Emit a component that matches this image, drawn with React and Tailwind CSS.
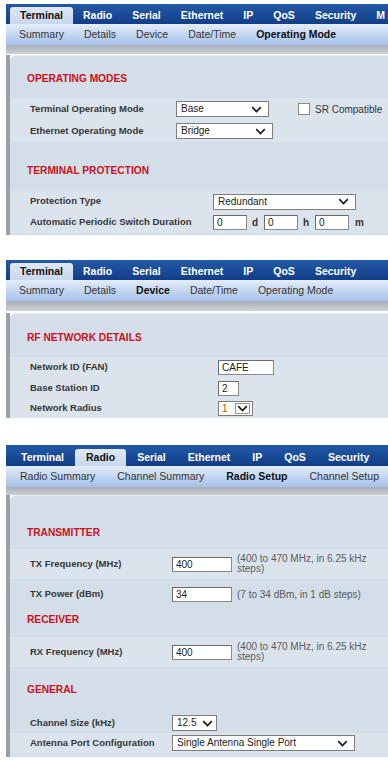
import React from "react";

const FONT = { fontFamily: '"Liberation Sans", Arial, Helvetica, sans-serif' };

function Chevron() {
  return (
    <svg width="11" height="7" viewBox="0 0 11 7" className="shrink-0">
      <path d="M1.2 1.2 L5.5 5.5 L9.8 1.2" fill="none" stroke="#1a1a1a" strokeWidth="1.7" />
    </svg>
  );
}

function Select({ value, w, chevPad = "pr-[6px]" }) {
  return (
    <div
      className={`flex items-center justify-between h-[16px] bg-white border border-[#7d7d7d] pl-[4px] ${chevPad} text-[10px] text-[#222] leading-none whitespace-nowrap`}
      style={{ width: w }}
    >
      <span>{value}</span>
      <Chevron />
    </div>
  );
}

function Input({ value, w }) {
  return (
    <div
      className="h-[15px] shrink-0 bg-white border border-[#8a8a8a] border-t-[#6a6a6a] border-l-[#6a6a6a] pl-[3px] text-[10px] text-[#222] leading-[13px]"
      style={{ width: w }}
    >
      {value}
    </div>
  );
}

function TabBar({ tabs, active, h = "h-[20px]", px = "px-[10px]" }) {
  return (
    <div className={`${h} flex items-end pl-[4px] bg-gradient-to-b from-[#2359a8] to-[#123e88] whitespace-nowrap overflow-hidden`}>
      {tabs.map((t) => (
        <div
          key={t}
          className={
            t === active
              ? `h-[17px] ${px} flex items-center rounded-t-[3px] bg-gradient-to-b from-[#dfe8f5] to-[#c7d7ef] text-[#111] font-bold text-[10.5px]`
              : `h-[17px] ${px} flex items-center text-white font-bold text-[10.5px]`
          }
        >
          {t}
        </div>
      ))}
    </div>
  );
}

function SubNav({ items, active, h = "h-[21px]", px = "px-[10px]" }) {
  return (
    <div className={`${h} flex items-center pl-[3px] bg-gradient-to-b from-[#e4edf9] to-[#a6c1ea] whitespace-nowrap overflow-hidden`}>
      {items.map((t) => (
        <div
          key={t}
          className={`${px} shrink-0 text-[10.5px] ${t === active ? "font-bold text-[#111]" : "text-[#333]"}`}
        >
          {t}
        </div>
      ))}
    </div>
  );
}

function Band({ h = "h-[9px]" }) {
  return <div className={`${h} bg-gradient-to-b from-[#a7aeb6] to-[#cdd1d5]`} />;
}

function Heading({ children, cls }) {
  return (
    <div className={`h-[12px] leading-[12px] pl-[17px] text-[10.2px] font-bold text-[#cc1020] ${cls}`}>
      {children}
    </div>
  );
}

function Row({ label, labelW, h = "h-[21px]", children, band = true }) {
  return (
    <div className={`${h} flex items-center ${band ? "bg-[#dbe4ed]" : ""}`}>
      <div className="shrink-0 pl-[20px] text-[9.5px] font-bold text-[#363636] whitespace-nowrap" style={{ width: labelW }}>
        {label}
      </div>
      {children}
    </div>
  );
}

function Box({ children, h }) {
  return (
    <div className="flex" style={{ height: h }}>
      <div className="w-[4px] bg-[#9c9fa3]" />
      <div className="flex-1 flex flex-col rounded-tl-[6px] bg-[#d3dee8] border-t border-[#e8eef3]">
        {children}
      </div>
    </div>
  );
}

const TABS = ["Terminal", "Radio", "Serial", "Ethernet", "IP", "QoS", "Security", "M"];
const TABS2 = ["Terminal", "Radio", "Serial", "Ethernet", "IP", "QoS", "Security"];

function Help() {
  return (
    <div className="ml-[5px] text-[10px] leading-[10px] text-[#5a5a5a] whitespace-nowrap">
      (400 to 470 MHz, in 6.25 kHz
      <br />
      steps)
    </div>
  );
}

export default function App() {
  return (
    <div className="w-[388px] h-[761px] bg-white overflow-hidden pl-[6px]" style={FONT}>
      {/* Panel 1 */}
      <div className="pt-[4px]">
        <TabBar tabs={TABS} active="Terminal" />
        <SubNav items={["Summary", "Details", "Device", "Date/Time", "Operating Mode"]} active="Operating Mode" />
        <Band />
        <div className="h-[1px]" />
        <Box h={180}>
          <Heading cls="mt-[17px]">OPERATING MODES</Heading>
          <div className="mt-[13px]">
            <Row label="Terminal Operating Mode" labelW={166} h="h-[22px]">
              <Select value="Base" w={93} />
              <div className="ml-[29px] w-[12px] h-[12px] bg-white border border-[#8a8a8a]" />
              <div className="ml-[5px] text-[10px] text-[#333]">SR Compatible</div>
            </Row>
            <Row label="Ethernet Operating Mode" labelW={166} h="h-[22px]">
              <Select value="Bridge" w={97} />
            </Row>
          </div>
          <Heading cls="mt-[23px]">TERMINAL PROTECTION</Heading>
          <div className="mt-[14px]">
            <Row label="Protection Type" labelW={203}>
              <Select value="Redundant" w={143} />
            </Row>
            <Row label="Automatic Periodic Switch Duration" labelW={203}>
              <Input value="0" w={34} />
              <span className="ml-[5px] w-[12px] text-[10px] font-bold text-[#333]">d</span>
              <Input value="0" w={34} />
              <span className="ml-[5px] w-[12px] text-[10px] font-bold text-[#333]">h</span>
              <Input value="0" w={34} />
              <span className="ml-[6px] text-[10px] font-bold text-[#333]">m</span>
            </Row>
          </div>
        </Box>
      </div>

      {/* Panel 2 */}
      <div className="mt-[25px]">
        <TabBar tabs={TABS2} active="Terminal" />
        <SubNav items={["Summary", "Details", "Device", "Date/Time", "Operating Mode"]} active="Device" />
        <Band h="h-[10px]" />
        <div className="h-[2px]" />
        <Box h={105}>
          <Heading cls="mt-[18px]">RF NETWORK DETAILS</Heading>
          <div className="mt-[13px]">
            <Row label="Network ID (FAN)" labelW={208}>
              <Input value="CAFE" w={56} />
            </Row>
            <Row label="Base Station ID" labelW={208} h="h-[20px]">
              <Input value="2" w={21} />
            </Row>
            <Row label="Network Radius" labelW={208} h="h-[20px]">
              <div className="flex items-center h-[15px] w-[35px] bg-white border border-[#7d7d7d] pl-[3px] pr-[2px] text-[10px] text-[#8a6a00] justify-between">
                <span>1</span>
                <span className="border border-[#999] h-[11px] px-[1px] flex items-center">
                  <Chevron />
                </span>
              </div>
            </Row>
          </div>
        </Box>
      </div>

      {/* Panel 3 */}
      <div className="mt-[27px]">
        <TabBar tabs={TABS2} active="Radio" h="h-[21px]" px="px-[11px]" />
        <SubNav
          items={["Radio Summary", "Channel Summary", "Radio Setup", "Channel Setup"]}
          active="Radio Setup"
          px="px-[11px]"
        />
        <Band h="h-[8px]" />
        <Box h={262}>
          <Heading cls="mt-[31px]">TRANSMITTER</Heading>
          <div className="mt-[10px]">
            <Row label="TX Frequency (MHz)" labelW={162} h="h-[30px]">
              <Input value="400" w={60} />
              <Help />
            </Row>
            <Row label="TX Power (dBm)" labelW={162} h="h-[30px]" band={false}>
              <Input value="34" w={60} />
              <div className="ml-[5px] text-[10px] text-[#5a5a5a]">(7 to 34 dBm, in 1 dB steps)</div>
            </Row>
          </div>
          <Heading cls="mt-[5px]">RECEIVER</Heading>
          <div className="mt-[11px]">
            <Row label="RX Frequency (MHz)" labelW={162} h="h-[30px]">
              <Input value="400" w={60} />
              <Help />
            </Row>
          </div>
          <Heading cls="mt-[17px]">GENERAL</Heading>
          <div className="mt-[17px]">
            <Row label="Channel Size (kHz)" labelW={162} h="h-[20px]" band={false}>
              <Select value="12.5" w={45} chevPad="pr-[3px]" />
            </Row>
            <Row label="Antenna Port Configuration" labelW={162} h="h-[20px]">
              <Select value="Single Antenna Single Port" w={183} />
            </Row>
          </div>
        </Box>
      </div>
    </div>
  );
}
